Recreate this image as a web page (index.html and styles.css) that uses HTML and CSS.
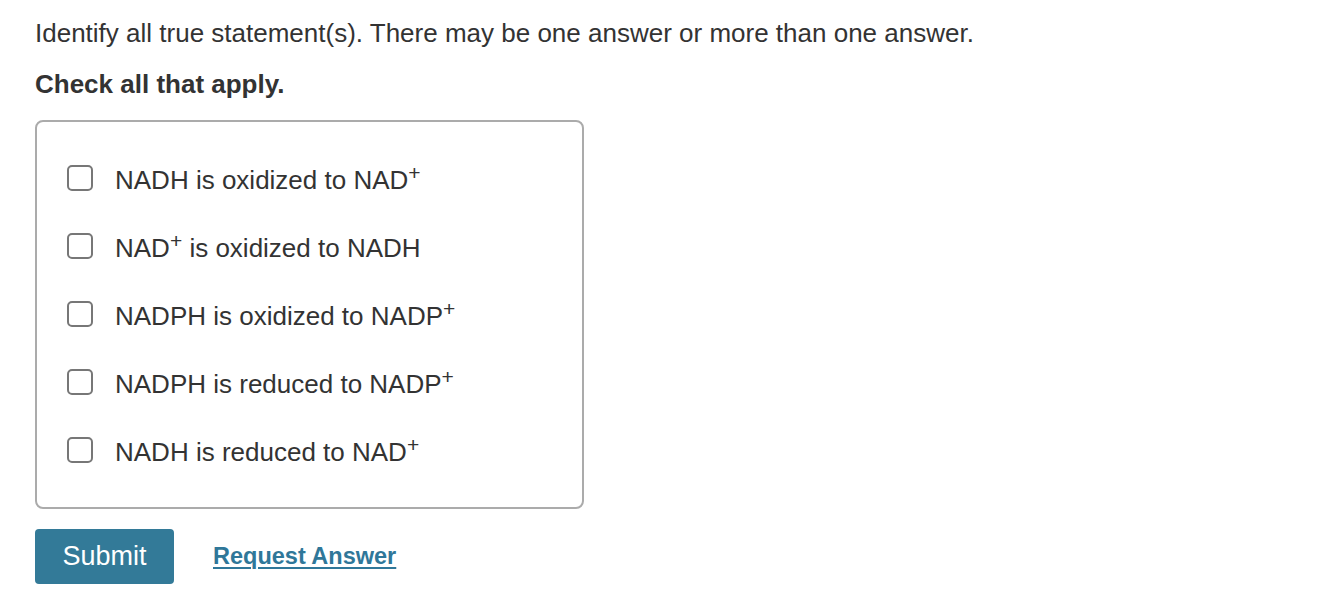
FILE: index.html
```html
<!DOCTYPE html>
<html lang="en">
<head>
<meta charset="utf-8">
<title>Check all that apply</title>
<link rel="stylesheet" href="styles.css">
</head>
<body>
<main class="question">
  <p class="prompt">Identify all true statement(s). There may be one answer or more than one answer.</p>
  <p class="instruction">Check all that apply.</p>
  <fieldset class="choices">
    <label class="choice"><span class="box"></span><span class="label-text">NADH is oxidized to NAD<sup>+</sup></span></label>
    <label class="choice"><span class="box"></span><span class="label-text">NAD<sup>+</sup> is oxidized to NADH</span></label>
    <label class="choice"><span class="box"></span><span class="label-text">NADPH is oxidized to NADP<sup>+</sup></span></label>
    <label class="choice"><span class="box"></span><span class="label-text">NADPH is reduced to NADP<sup>+</sup></span></label>
    <label class="choice"><span class="box"></span><span class="label-text">NADH is reduced to NAD<sup>+</sup></span></label>
  </fieldset>
  <div class="actions">
    <button class="submit" type="button">Submit</button>
    <a class="request" href="#">Request Answer</a>
  </div>
</main>
</body>
</html>
```

FILE: styles.css
```css
html, body {
  margin: 0;
  padding: 0;
  background: #ffffff;
}

body {
  font-family: "Liberation Sans", Arial, Helvetica, sans-serif;
  color: #333333;
}

.question {
  padding: 17px 35px 0 35px;
}

.prompt {
  margin: 0;
  font-size: 26px;
  line-height: 32px;
}

.instruction {
  margin: 19px 0 0 0;
  font-size: 26px;
  line-height: 32px;
  font-weight: bold;
}

.choices {
  margin: 20px 0 0 0;
  padding: 43px 0 42px 30px;
  width: 515px;
  border: 2px solid #ababab;
  border-radius: 8px;
  display: flex;
  flex-direction: column;
  gap: 40px;
  box-sizing: content-box;
  min-inline-size: 0;
}

.choice {
  display: flex;
  align-items: flex-start;
  font-size: 26px;
}

.box {
  width: 22px;
  height: 22px;
  border: 2px solid #777777;
  border-radius: 5px;
  flex: none;
  margin-right: 22px;
}

.label-text {
  line-height: 26px;
  margin-top: 2px;
  white-space: nowrap;
}

.label-text sup {
  font-size: 21px;
  line-height: 0;
  vertical-align: 0;
  position: relative;
  top: -9px;
}

.actions {
  display: flex;
  align-items: center;
  margin-top: 20px;
  gap: 39px;
}

.submit {
  width: 139px;
  height: 55px;
  border: none;
  border-radius: 4px;
  background: #337a98;
  color: #ffffff;
  font-family: "Liberation Sans", Arial, Helvetica, sans-serif;
  font-size: 27px;
  padding: 0;
}

.request {
  color: #2f7799;
  font-weight: bold;
  font-size: 23.5px;
  text-decoration: underline;
  text-decoration-thickness: 2px;
  text-underline-offset: 3px;
}
```
